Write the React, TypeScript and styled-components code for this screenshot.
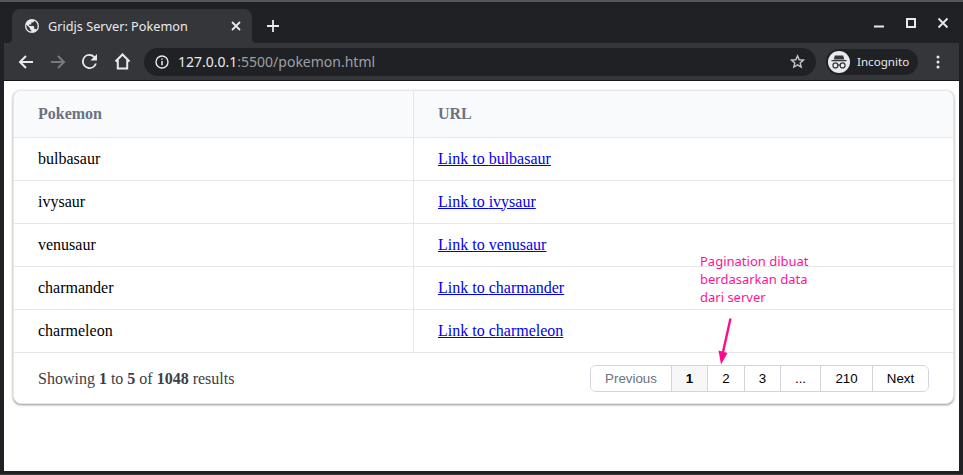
import React from "react";
import styled, { createGlobalStyle } from "styled-components";

const Global = createGlobalStyle`
  html, body { margin: 0; padding: 0; background: #fff; }
  * { box-sizing: border-box; }
`;

const Frame = styled.div`
  position: relative;
  width: 963px;
  height: 475px;
  overflow: hidden;
  display: flex;
  flex-direction: column;
  background: #202124;
  border-top: 2px solid #55575a;
  padding: 0 4px 3px 4px;
  border-bottom: 1px solid #3a3a3a;
`;

const TabStrip = styled.div`
  height: 41px;
  flex: none;
  display: flex;
  align-items: flex-end;
  padding-left: 8px;
  background: #202124;
  font-family: "Noto Sans", sans-serif;
`;

const Tab = styled.div`
  width: 240px;
  height: 34px;
  background: #35363a;
  border-radius: 8px 8px 0 0;
  display: flex;
  align-items: center;
  padding: 0 11px 0 13px;
  color: #e8eaed;
  font-size: 12.7px;
  gap: 9px;
  position: relative;
  &::before, &::after {
    content: "";
    position: absolute;
    bottom: 0;
    width: 5px;
    height: 5px;
  }
  &::before {
    left: -5px;
    background: radial-gradient(circle at 0 0, transparent 5px, #35363a 5.5px);
  }
  &::after {
    right: -5px;
    background: radial-gradient(circle at 100% 0, transparent 5px, #35363a 5.5px);
  }
`;

const TabTitle = styled.span`
  flex: 1;
  white-space: nowrap;
`;

const NewTab = styled.div`
  width: 24px;
  height: 24px;
  margin: 0 0 5px 9px;
  display: flex;
  align-items: center;
  justify-content: center;
  align-self: flex-end;
`;

const WindowControls = styled.div`
  margin-left: auto;
  display: flex;
  align-items: center;
  align-self: center;
  gap: 20px;
  padding-right: 10px;
`;

const Toolbar = styled.div`
  height: 37px;
  flex: none;
  background: #35363a;
  display: flex;
  align-items: center;
  padding-left: 14px;
  font-family: "Noto Sans", sans-serif;
`;

const NavIcon = styled.div`
  width: 32px;
  height: 24px;
  display: flex;
  align-items: center;
`;

const Omnibox = styled.div`
  width: 672px;
  height: 28px;
  margin-left: -2px;
  border-radius: 14px;
  background: #202124;
  display: flex;
  align-items: center;
  padding: 0 11px 0 11px;
  font-size: 14px;
  gap: 9px;
`;

const Url = styled.span`
  flex: 1;
  color: #9aa0a6;
  white-space: nowrap;
  font-size: 14px;
`;

const Host = styled.span`
  color: #e8eaed;
`;

const IncognitoChip = styled.div`
  margin-left: 10px;
  height: 26px;
  width: 92px;
  border-radius: 13px;
  background: #202124;
  display: flex;
  align-items: center;
  gap: 7px;
  padding-left: 2px;
  color: #e8eaed;
  font-size: 11.6px;
`;

const Avatar = styled.div`
  width: 22px;
  height: 22px;
  border-radius: 50%;
  background: #e8eaed;
  display: flex;
  align-items: center;
  justify-content: center;
`;

const Menu = styled.div`
  margin-left: 10px;
  width: 20px;
  display: flex;
  justify-content: center;
`;

const Page = styled.div`
  flex: 1;
  background: #fff;
  border-top: 1px solid #17181a;
  padding: 9px 5px 0 9px;
  font-family: "Liberation Serif", serif;
  font-size: 16px;
`;

const Card = styled.div`
  border-radius: 8px;
  border: 1px solid #e5e7eb;
  box-shadow: 0 1px 3px 0 rgba(0, 0, 0, 0.26), 0 1px 2px 0 rgba(0, 0, 0, 0.2);
  background: #fff;
`;

const Table = styled.table`
  width: 100%;
  border-collapse: collapse;
  table-layout: fixed;
`;

const HeadCell = styled.th`
  background: #f9fafb;
  color: #6b7280;
  font-weight: 700;
  text-align: left;
  height: 46px;
  padding: 0 24px;
  border-bottom: 1px solid #e5e7eb;
  border-right: 1px solid #e5e7eb;
  &:first-child { border-radius: 8px 0 0 0; width: 399.5px; }
  &:last-child { border-right: 0; border-radius: 0 8px 0 0; }
`;

const Cell = styled.td`
  height: 43px;
  padding: 0 24px;
  color: #000;
  border-bottom: 1px solid #e5e7eb;
  border-right: 1px solid #e5e7eb;
  &:last-child { border-right: 0; }
`;

const Footer = styled.div`
  height: 50px;
  padding: 1px 24px 0;
  display: flex;
  align-items: center;
  justify-content: space-between;
  color: #3d4044;
`;

const Summary = styled.div`
  padding-top: 2px;
`;

const Pager = styled.div`
  display: flex;
  height: 27px;
  border: 1px solid #d2d6dc;
  border-radius: 6px;
  overflow: hidden;
  font-family: "Liberation Sans", sans-serif;
  font-size: 13.33px;
`;

const PageButton = styled.div<{ $w: number; $active?: boolean; $muted?: boolean }>`
  width: ${(p) => p.$w}px;
  display: flex;
  align-items: center;
  justify-content: center;
  border-right: 1px solid #d2d6dc;
  color: ${(p) => (p.$muted ? "#6b7280" : "#000")};
  font-weight: ${(p) => (p.$active ? 700 : 400)};
  background: ${(p) => (p.$active ? "#f7f7f7" : "#fff")};
  &:last-child { border-right: 0; }
`;

const Note = styled.div`
  position: absolute;
  left: 700px;
  top: 250px;
  width: 130px;
  color: #ff1493;
  font-family: "Noto Sans", sans-serif;
  font-size: 13px;
  line-height: 18px;
`;

const Arrow = styled.svg`
  position: absolute;
  left: 712px;
  top: 312px;
`;

const rows = ["bulbasaur", "ivysaur", "venusaur", "charmander", "charmeleon"];

export default function App() {
  return (
    <Frame>
      <Global />
      <TabStrip>
        <Tab>
          <svg width="14" height="14" viewBox="2 2 20 20">
            <path fill="#e8eaed" d="M12 2a10 10 0 1 0 0 20 10 10 0 0 0 0-20zM4 12c0-.6.1-1.2.2-1.8L9 15v1c0 1.1.9 2 2 2v2a8 8 0 0 1-7-8zm13.9 5.4c-.3-.8-1-1.4-1.9-1.4h-1v-3c0-.6-.4-1-1-1H8v-2h2c.6 0 1-.4 1-1V7h2c1.1 0 2-.9 2-2v-.4a8 8 0 0 1 2.9 12.8z" />
          </svg>
          <TabTitle>Gridjs Server: Pokemon</TabTitle>
          <svg width="10" height="10" viewBox="0 0 10 10">
            <path d="M1 1l8 8M9 1l-8 8" stroke="#e8eaed" strokeWidth="1.8" />
          </svg>
        </Tab>
        <NewTab>
          <svg width="12" height="12" viewBox="0 0 12 12">
            <path d="M6 0v12M0 6h12" stroke="#e8eaed" strokeWidth="1.8" />
          </svg>
        </NewTab>
        <WindowControls>
          <svg width="12" height="12" viewBox="0 0 12 12">
            <path d="M1 9.500h10" stroke="#e8eaed" strokeWidth="2" />
          </svg>
          <svg width="12" height="12" viewBox="0 0 12 12">
            <rect x="2" y="2" width="8" height="8" fill="none" stroke="#e8eaed" strokeWidth="2" />
          </svg>
          <svg width="12" height="12" viewBox="0 0 12 12">
            <path d="M1.500 1.500l9 9M10.500 1.500l-9 9" stroke="#e8eaed" strokeWidth="1.800" />
          </svg>
        </WindowControls>
      </TabStrip>
      <Toolbar>
        <NavIcon>
          <svg width="16" height="16" viewBox="0 0 16 16">
            <path d="M15 8H2M8 2L2 8l6 6" fill="none" stroke="#e8eaed" strokeWidth="2" />
          </svg>
        </NavIcon>
        <NavIcon>
          <svg width="16" height="16" viewBox="0 0 16 16">
            <path d="M1 8h13M8 2l6 6-6 6" fill="none" stroke="#77797d" strokeWidth="2" />
          </svg>
        </NavIcon>
        <NavIcon>
          <svg width="15" height="15" viewBox="4 4 16 16">
            <path fill="#e8eaed" d="M17.650 6.350A7.960 7.960 0 0 0 12 4a8 8 0 1 0 7.730 10h-2.080A6 6 0 1 1 12 6c1.660 0 3.140.690 4.220 1.780L13 11h7V4l-2.350 2.350z" />
          </svg>
        </NavIcon>
        <NavIcon>
          <svg width="17" height="17" viewBox="0 0 17 17">
            <path d="M1.500 8.500L8.500 1.500l7 7M3.800 7v8.500h9.400V7" fill="none" stroke="#e8eaed" strokeWidth="2" />
          </svg>
        </NavIcon>
        <Omnibox>
          <svg width="14" height="14" viewBox="0 0 14 14">
            <circle cx="7" cy="7" r="6" fill="none" stroke="#e8eaed" strokeWidth="1.400" />
            <path d="M7 6v4.200M7 3.400v1.400" stroke="#e8eaed" strokeWidth="1.500" />
          </svg>
          <Url>
            <Host>127.0.0.1</Host>:5500/pokemon.html
          </Url>
          <svg width="15" height="15" viewBox="0 0 24 24">
            <path fill="none" stroke="#c4c7cb" strokeWidth="2.200" d="M12 3l2.700 6.200 6.800.6-5.200 4.500 1.600 6.700L12 17.400 6.100 21l1.600-6.700L2.500 9.800l6.800-.6z" />
          </svg>
        </Omnibox>
        <IncognitoChip>
          <Avatar>
            <svg width="18" height="18" viewBox="0 0 16 16">
              <path fill="#35363a" d="M4.300 2.200h7.400l1 3.600H3.300zM1.300 6.300h13.400v1H1.300z" />
              <circle cx="4.800" cy="11" r="2.200" fill="none" stroke="#35363a" strokeWidth="1.100" />
              <circle cx="11.200" cy="11" r="2.200" fill="none" stroke="#35363a" strokeWidth="1.100" />
              <path d="M7 10.700h2" stroke="#35363a" strokeWidth="1" />
            </svg>
          </Avatar>
          Incognito
        </IncognitoChip>
        <Menu>
          <svg width="4" height="14" viewBox="0 0 4 14">
            <circle cx="2" cy="2" r="1.500" fill="#e8eaed" />
            <circle cx="2" cy="7" r="1.500" fill="#e8eaed" />
            <circle cx="2" cy="12" r="1.500" fill="#e8eaed" />
          </svg>
        </Menu>
      </Toolbar>
      <Page>
        <Card>
          <Table>
            <thead>
              <tr>
                <HeadCell>Pokemon</HeadCell>
                <HeadCell>URL</HeadCell>
              </tr>
            </thead>
            <tbody>
              {rows.map((r) => (
                <tr key={r}>
                  <Cell>{r}</Cell>
                  <Cell>
                    <a href="#">Link to {r}</a>
                  </Cell>
                </tr>
              ))}
            </tbody>
          </Table>
          <Footer>
            <Summary>
              Showing <b>1</b> to <b>5</b> of <b>1048</b> results
            </Summary>
            <Pager>
              <PageButton $w={81} $muted>Previous</PageButton>
              <PageButton $w={36} $active>1</PageButton>
              <PageButton $w={37}>2</PageButton>
              <PageButton $w={36}>3</PageButton>
              <PageButton $w={40}>...</PageButton>
              <PageButton $w={52}>210</PageButton>
              <PageButton $w={55}>Next</PageButton>
            </Pager>
          </Footer>
        </Card>
      </Page>
      <Note>
        Pagination dibuat
        <br />
        berdasarkan data
        <br />
        dari server
      </Note>
      <Arrow width="24" height="54" viewBox="0 0 24 54">
        <path d="M18.500 4.500L11 38" stroke="#ff0a8c" strokeWidth="2.400" fill="none" />
        <path d="M6.500 36.500L9 50.500 15.500 39z" fill="#ff0a8c" />
      </Arrow>
    </Frame>
  );
}
